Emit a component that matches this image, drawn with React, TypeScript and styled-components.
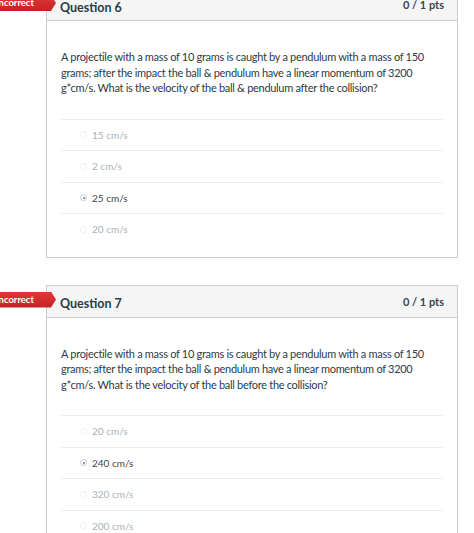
import styled, { createGlobalStyle } from 'styled-components'

const GlobalStyle = createGlobalStyle`
  body {
    margin: 0;
    background: #ffffff;
    font-family: Lato, "Noto Sans", sans-serif;
    color: #2d3b45;
  }
`

const Page = styled.main`
  display: grid;
  gap: 27px;
  width: 412px;
  margin-top: -12px;
  padding-left: 46px;
`

const Card = styled.section`
  position: relative;
  box-sizing: border-box;
  border: 1px solid #c7cdd1;
  background: #ffffff;
`

const Header = styled.header`
  display: flex;
  align-items: center;
  justify-content: space-between;
  box-sizing: border-box;
  height: 32px;
  padding: 0 13px;
  border-bottom: 1px solid #c7cdd1;
  background: #f5f5f5;
`

const Title = styled.h2`
  margin: 0;
  padding-top: 5px;
  font-size: 12.5px;
  font-weight: 700;
  color: #2d3b45;
`

const Points = styled.div`
  font-size: 11px;
  font-weight: 700;
  color: #3a464f;
`

const Badge = styled.div`
  position: absolute;
  top: 6px;
  right: calc(100% - 9px);
  box-sizing: border-box;
  width: 72px;
  height: 16px;
  padding-right: 22px;
  font-size: 9.5px;
  font-weight: 700;
  line-height: 16px;
  text-align: right;
  color: #ffffff;
  background: linear-gradient(#e0383b, #c52226);
  clip-path: polygon(0 0, calc(100% - 5px) 0, 100% 50%, calc(100% - 5px) 100%, 0 100%);
`

const Body = styled.div`
  padding: 28px 14px 12px;
`

const Text = styled.p`
  margin: 0 0 23px;
  font-size: 11px;
  letter-spacing: -0.3px;
  line-height: 15.5px;
  color: #2d3b45;
`

const Answers = styled.ul`
  margin: 0;
  padding: 0;
  list-style: none;
`

const Answer = styled.li<{ $selected?: boolean }>`
  display: flex;
  align-items: center;
  gap: 5px;
  box-sizing: border-box;
  height: 31.5px;
  padding-left: 19px;
  border-top: 1px solid #eceeef;
  font-size: 10px;
  color: ${(p) => (p.$selected ? '#3d464d' : '#a9b0b5')};
`

const Radio = styled.span<{ $selected?: boolean }>`
  position: relative;
  box-sizing: border-box;
  width: 7px;
  height: 7px;
  border: 1px solid ${(p) => (p.$selected ? '#c4c9cc' : '#eef0f1')};
  border-radius: 50%;

  &::after {
    content: '';
    display: ${(p) => (p.$selected ? 'block' : 'none')};
    position: absolute;
    inset: 1.5px;
    border-radius: 50%;
    background: #6b7780;
  }
`

type Question = {
  number: number
  text: string
  answers: string[]
  selected: number
}

const questions: Question[] = [
  {
    number: 6,
    text: 'A projectile with a mass of 10 grams is caught by a pendulum with a mass of 150 grams; after the impact the ball & pendulum have a linear momentum of 3200 g*cm/s. What is the velocity of the ball & pendulum after the collision?',
    answers: ['15 cm/s', '2 cm/s', '25 cm/s', '20 cm/s'],
    selected: 2,
  },
  {
    number: 7,
    text: 'A projectile with a mass of 10 grams is caught by a pendulum with a mass of 150 grams; after the impact the ball & pendulum have a linear momentum of 3200 g*cm/s. What is the velocity of the ball before the collision?',
    answers: ['20 cm/s', '240 cm/s', '320 cm/s', '200 cm/s'],
    selected: 1,
  },
]

export default function App() {
  return (
    <>
      <GlobalStyle />
      <Page>
        {questions.map((q) => (
          <Card key={q.number}>
            <Badge>Incorrect</Badge>
            <Header>
              <Title>Question {q.number}</Title>
              <Points>0 / 1 pts</Points>
            </Header>
            <Body>
              <Text>{q.text}</Text>
              <Answers>
                {q.answers.map((a, i) => (
                  <Answer key={a} $selected={i === q.selected}>
                    <Radio $selected={i === q.selected} />
                    {a}
                  </Answer>
                ))}
              </Answers>
            </Body>
          </Card>
        ))}
      </Page>
    </>
  )
}
